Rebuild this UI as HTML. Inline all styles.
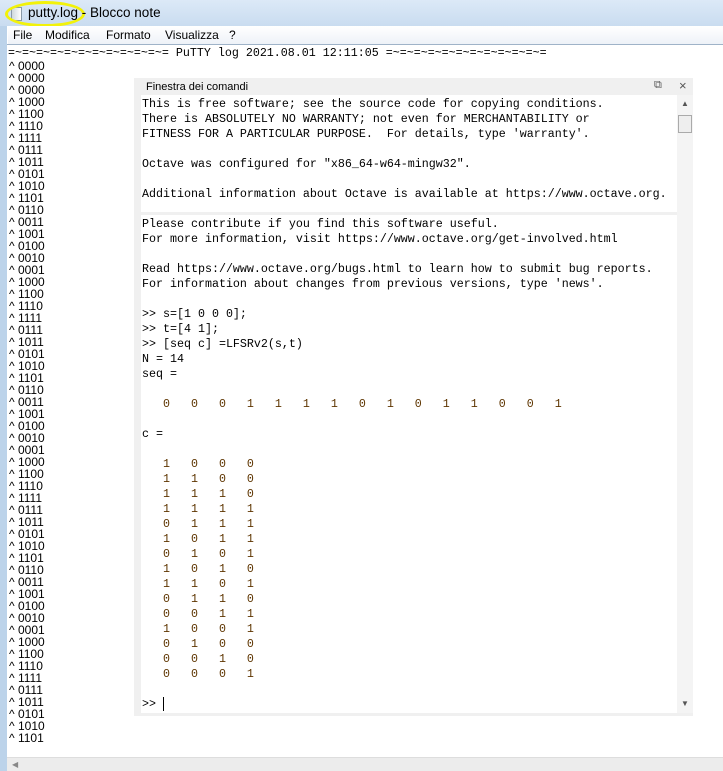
<!DOCTYPE html>
<html><head><meta charset="utf-8"><style>
*{margin:0;padding:0;box-sizing:border-box}
body{width:723px;height:771px;overflow:hidden;background:#fff;font-family:"Liberation Sans",sans-serif;position:relative}
#title{position:absolute;left:0;top:0;width:723px;height:26px;background:linear-gradient(#dce9f7,#c9dcf0);}
#title span{position:absolute;left:28px;top:5px;font-size:13.5px;color:#000}
#icon{position:absolute;left:11px;top:7px;width:11px;height:14px;background:linear-gradient(90deg,#cfd8dc,#fff);border:1px solid #8a9aa8}
#ell{position:absolute;left:5px;top:1px;width:80px;height:26px;border:3px solid #f2f20a;border-radius:50%}
#menu{position:absolute;left:8px;top:26px;width:715px;height:18px;background:linear-gradient(#fff,#eef2f8);font-size:12px}
#menu span{position:absolute;top:2px}
#lb{position:absolute;left:0;top:26px;width:7px;height:745px;background:#bcd3ea}
#edit{position:absolute;left:7px;top:44px;width:716px;height:713px;border-top:1px solid #9fb3c8}
.mono{font-family:"Liberation Mono",monospace;font-size:11.67px;white-space:pre}
#hdr{position:absolute;left:8px;top:46px;line-height:14px}
#left{position:absolute;left:9px;top:60px;font-size:12px;line-height:12px;white-space:pre;color:#000}
#hs{position:absolute;left:7px;top:757px;width:716px;height:14px;background:#ececec;border-top:1px solid #ddd;font-size:8px;color:#888}
#oct{position:absolute;left:134px;top:78px;width:559px;height:638px;background:#f0f0f0}
#oct .t{position:absolute;left:12px;top:3px;font-size:11px;color:#000}
#cont{position:absolute;left:7px;top:17px;width:536px;height:618px;background:#fff}
#sep{position:absolute;left:0;top:117px;width:536px;height:3px;background:#f0f0f0}
#txt{position:absolute;left:1px;top:2px;line-height:15px;color:#000}
.n{color:#5e3500}
#sb{position:absolute;left:543px;top:17px;width:16px;height:618px;background:#f4f4f4;font-size:8px;color:#555}
</style></head><body>
<div id="title"><div id="icon"></div><div id="ell"></div><span>putty.log - Blocco note</span></div>
<div id="lb"></div>
<div id="menu"><span style="left:5px">File</span><span style="left:37px">Modifica</span><span style="left:98px">Formato</span><span style="left:157px">Visualizza</span><span style="left:221px">?</span></div>
<div id="edit"></div>
<div id="hdr" class="mono">=~=~=~=~=~=~=~=~=~=~=~= PuTTY log 2021.08.01 12:11:05 =~=~=~=~=~=~=~=~=~=~=~=</div>
<div id="left">^ 0000
^ 0000
^ 0000
^ 1000
^ 1100
^ 1110
^ 1111
^ 0111
^ 1011
^ 0101
^ 1010
^ 1101
^ 0110
^ 0011
^ 1001
^ 0100
^ 0010
^ 0001
^ 1000
^ 1100
^ 1110
^ 1111
^ 0111
^ 1011
^ 0101
^ 1010
^ 1101
^ 0110
^ 0011
^ 1001
^ 0100
^ 0010
^ 0001
^ 1000
^ 1100
^ 1110
^ 1111
^ 0111
^ 1011
^ 0101
^ 1010
^ 1101
^ 0110
^ 0011
^ 1001
^ 0100
^ 0010
^ 0001
^ 1000
^ 1100
^ 1110
^ 1111
^ 0111
^ 1011
^ 0101
^ 1010
^ 1101</div>
<div id="hs"><span style="position:absolute;left:5px;top:2px">◀</span></div>
<div id="oct"><div class="t">Finestra dei comandi</div>
<div style="position:absolute;left:520px;top:1px;font-size:11px;color:#555">⧉</div>
<div style="position:absolute;left:545px;top:0px;font-size:13px;color:#555">×</div>
<div id="cont"><div id="sep"></div><div id="txt" class="mono">This is free software; see the source code for copying conditions.
There is ABSOLUTELY NO WARRANTY; not even for MERCHANTABILITY or
FITNESS FOR A PARTICULAR PURPOSE.  For details, type 'warranty'.

Octave was configured for "x86_64-w64-mingw32".

Additional information about Octave is available at https://www.octave.org.

Please contribute if you find this software useful.
For more information, visit https://www.octave.org/get-involved.html

Read https://www.octave.org/bugs.html to learn how to submit bug reports.
For information about changes from previous versions, type 'news'.

>> s=[1 0 0 0];
>> t=[4 1];
>> [seq c] =LFSRv2(s,t)
N = 14
seq =

<span class="n">   0   0   0   1   1   1   1   0   1   0   1   1   0   0   1</span>

c =

<span class="n">   1   0   0   0
   1   1   0   0
   1   1   1   0
   1   1   1   1
   0   1   1   1
   1   0   1   1
   0   1   0   1
   1   0   1   0
   1   1   0   1
   0   1   1   0
   0   0   1   1
   1   0   0   1
   0   1   0   0
   0   0   1   0
   0   0   0   1</span>

&gt;&gt; <span style="border-left:1px solid #000"> </span></div></div>
<div id="sb"><span style="position:absolute;left:4px;top:4px">▲</span><div style="position:absolute;left:1px;top:20px;width:14px;height:18px;border:1px solid #aaa;background:#eee"></div><span style="position:absolute;left:4px;top:604px">▼</span></div>
</div>
</body></html>
